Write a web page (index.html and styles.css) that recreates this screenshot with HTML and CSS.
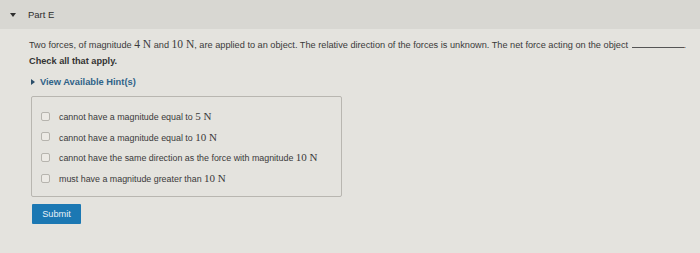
FILE: index.html
```html
<!DOCTYPE html>
<html>
<head>
<meta charset="utf-8">
<link rel="stylesheet" href="styles.css">
</head>
<body>
<div class="page">
  <div class="header">
    <span class="caret-down"></span>
    <span class="part-title">Part E</span>
  </div>
  <div class="content">
    <p class="question">Two forces, of magnitude <span class="m">4 N</span> and <span class="m">10 N</span>, are applied to an object. The relative direction of the forces is unknown. The net force acting on the object <span class="blank"></span>.</p>
    <p class="instr">Check all that apply.</p>
    <div class="hint"><span class="caret-right"></span><span class="hint-text">View Available Hint(s)</span></div>
    <div class="options">
      <label class="opt"><span class="box"></span><span>cannot have a magnitude equal to <span class="m">5 N</span></span></label>
      <label class="opt"><span class="box"></span><span>cannot have a magnitude equal to <span class="m">10 N</span></span></label>
      <label class="opt"><span class="box"></span><span>cannot have the same direction as the force with magnitude <span class="m">10 N</span></span></label>
      <label class="opt"><span class="box"></span><span>must have a magnitude greater than <span class="m">10 N</span></span></label>
    </div>
    <button class="submit">Submit</button>
  </div>
</div>
</body>
</html>
```

FILE: styles.css
```css
html, body {
  margin: 0;
  padding: 0;
}
body {
  width: 700px;
  height: 253px;
  overflow: hidden;
  background: #e4e3de;
  font-family: "Liberation Sans", Arial, sans-serif;
  color: #3a3a3a;
}
.page {
  height: 253px;
}
.header {
  height: 29px;
  background: #d8d7d2;
  display: flex;
  align-items: center;
  padding-left: 10px;
}
.caret-down {
  width: 0;
  height: 0;
  border-left: 3.5px solid transparent;
  border-right: 3.5px solid transparent;
  border-top: 4px solid #2e2e2e;
  margin-right: 12px;
}
.part-title {
  font-size: 9.5px;
  color: #2e2e2e;
}
.content {
  padding: 9px 0 0 29px;
}
.question {
  margin: 0;
  font-size: 9.2px;
  line-height: 12px;
  white-space: nowrap;
  color: #3a3a3a;
}
.m {
  font-family: "Liberation Serif", "Times New Roman", serif;
  font-size: 11.5px;
}
.blank {
  display: inline-block;
  width: 52px;
  border-bottom: 1px solid #555;
  margin-left: 1px;
}
.instr {
  margin: 4px 0 0;
  font-size: 9.2px;
  line-height: 12px;
  font-weight: bold;
  color: #333;
}
.hint {
  display: flex;
  align-items: center;
  margin-top: 9px;
  height: 12px;
  padding-left: 2px;
}
.caret-right {
  width: 0;
  height: 0;
  border-top: 3.5px solid transparent;
  border-bottom: 3.5px solid transparent;
  border-left: 4px solid #2b4e6a;
  margin-right: 5px;
}
.hint-text {
  font-size: 9.3px;
  font-weight: bold;
  color: #2f6288;
}
.options {
  margin-top: 8px;
  margin-left: 2px;
  width: 311px;
  height: 101px;
  box-sizing: border-box;
  border: 1px solid #b8b6b0;
  border-radius: 2px;
  padding: 13px 0 0 9px;
  display: flex;
  flex-direction: column;
  gap: 8.7px;
}
.opt {
  display: flex;
  align-items: center;
  font-size: 8.9px;
  height: 12px;
  color: #3a3a3a;
}
.opt .m {
  font-size: 11px;
}
.box {
  width: 7px;
  height: 7px;
  border: 1px solid #b6b4ae;
  border-radius: 2px;
  background: #eceae5;
  margin-right: 9px;
  flex: none;
}
.submit {
  margin-top: 7px;
  margin-left: 3px;
  width: 49px;
  height: 20px;
  background: #1b78b3;
  border: none;
  border-radius: 1px;
  color: #e8f1f7;
  font-family: "Liberation Sans", Arial, sans-serif;
  font-size: 9.2px;
  padding: 0;
}
```
